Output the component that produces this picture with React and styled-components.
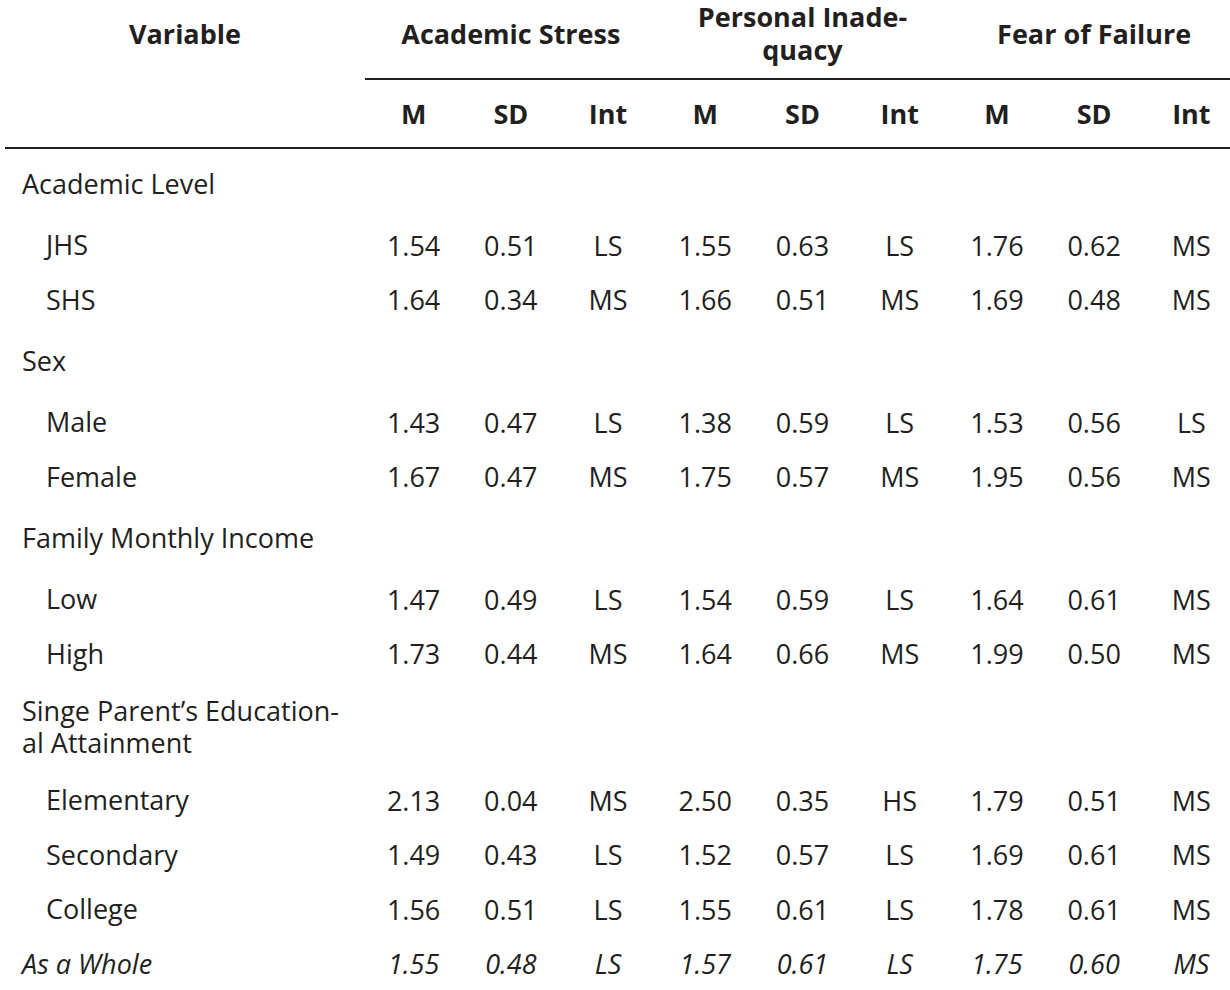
import React from "react";
import styled, { createGlobalStyle } from "styled-components";

const GlobalStyle = createGlobalStyle`
  html, body {
    margin: 0;
    padding: 0;
    background: #ffffff;
    overflow: hidden;
  }
  body {
    font-family: "Open Sans", "Noto Sans", "Liberation Sans", sans-serif;
    color: #231f20;
  }
`;

const Page = styled.div`
  width: 1230px;
  height: 990px;
  overflow: hidden;
  padding-left: 5px;
  box-sizing: border-box;
`;

const Table = styled.table`
  border-collapse: collapse;
  table-layout: fixed;
  width: 1235px;
  font-size: 27px;
`;

const HeadCell = styled.th`
  font-weight: 700;
  text-align: center;
  vertical-align: middle;
  padding: 0 0 ${(p) => p.$pb || 0}px;
  line-height: 33px;
  height: ${(p) => p.$h || 79}px;
  box-sizing: border-box;
  border-bottom: 2px solid #231f20;
`;

const VarHead = styled(HeadCell)`
  vertical-align: top;
  padding-top: 17px;
`;

const Row = styled.tr`
  height: ${(p) => p.$h}px;
`;

const Label = styled.td`
  padding: 0 0 0 ${(p) => (p.$indent ? 41 : 17)}px;
  font-style: ${(p) => (p.$italic ? "italic" : "normal")};
  line-height: 32px;
  vertical-align: middle;
  white-space: nowrap;
`;

const Num = styled.td`
  text-align: center;
  padding: 0;
  vertical-align: middle;
  font-style: ${(p) => (p.$italic ? "italic" : "normal")};
`;

const groups = ["Academic Stress", "Personal Inade-\nquacy", "Fear of Failure"];

const data = [
  { type: "cat", label: "Academic Level" },
  { type: "sub", label: "JHS", v: ["1.54", "0.51", "LS", "1.55", "0.63", "LS", "1.76", "0.62", "MS"] },
  { type: "sub", label: "SHS", v: ["1.64", "0.34", "MS", "1.66", "0.51", "MS", "1.69", "0.48", "MS"] },
  { type: "cat", label: "Sex" },
  { type: "sub", label: "Male", v: ["1.43", "0.47", "LS", "1.38", "0.59", "LS", "1.53", "0.56", "LS"] },
  { type: "sub", label: "Female", v: ["1.67", "0.47", "MS", "1.75", "0.57", "MS", "1.95", "0.56", "MS"] },
  { type: "cat", label: "Family Monthly Income" },
  { type: "sub", label: "Low", v: ["1.47", "0.49", "LS", "1.54", "0.59", "LS", "1.64", "0.61", "MS"] },
  { type: "sub", label: "High", v: ["1.73", "0.44", "MS", "1.64", "0.66", "MS", "1.99", "0.50", "MS"] },
  { type: "cat2", label: "Singe Parent\u2019s Education-\nal Attainment" },
  { type: "sub", label: "Elementary", v: ["2.13", "0.04", "MS", "2.50", "0.35", "HS", "1.79", "0.51", "MS"] },
  { type: "sub", label: "Secondary", v: ["1.49", "0.43", "LS", "1.52", "0.57", "LS", "1.69", "0.61", "MS"] },
  { type: "sub", label: "College", v: ["1.56", "0.51", "LS", "1.55", "0.61", "LS", "1.78", "0.61", "MS"] },
  { type: "total", label: "As a Whole", v: ["1.55", "0.48", "LS", "1.57", "0.61", "LS", "1.75", "0.60", "MS"] },
];

const heights = { cat: 68, cat2: 92, sub: 54.5, total: 54.5 };

const Lines = ({ text }) =>
  text.split("\n").map((t, i) => (
    <React.Fragment key={i}>
      {i > 0 && <br />}
      {t}
    </React.Fragment>
  ));

export default function App() {
  return (
    <Page>
      <GlobalStyle />
      <Table>
        <colgroup>
          <col style={{ width: 360 }} />
          {Array.from({ length: 9 }).map((_, i) => (
            <col key={i} />
          ))}
        </colgroup>
        <thead>
          <tr>
            <VarHead rowSpan={2}>Variable</VarHead>
            {groups.map((g) => (
              <HeadCell key={g} colSpan={3} $pb={12}>
                <Lines text={g} />
              </HeadCell>
            ))}
          </tr>
          <tr>
            {groups.map((g) =>
              ["M", "SD", "Int"].map((s) => (
                <HeadCell key={g + s} $h={69}>
                  {s}
                </HeadCell>
              ))
            )}
          </tr>
        </thead>
        <tbody>
          {data.map((r, i) => (
            <Row key={i} $h={i === 0 ? 70 : heights[r.type]}>
              <Label $indent={r.type === "sub"} $italic={r.type === "total"} colSpan={r.v ? 1 : 10}>
                <Lines text={r.label} />
              </Label>
              {r.v &&
                r.v.map((x, j) => (
                  <Num key={j} $italic={r.type === "total"}>
                    {x}
                  </Num>
                ))}
            </Row>
          ))}
        </tbody>
      </Table>
    </Page>
  );
}
